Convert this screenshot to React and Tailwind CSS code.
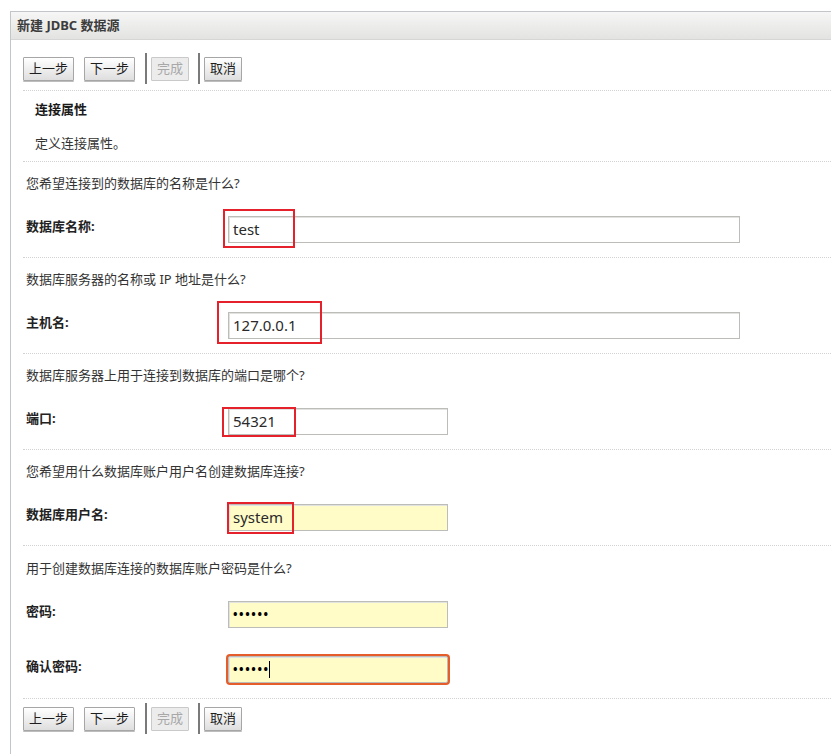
import React from "react";

const font = { fontFamily: '"Noto Sans", "Noto Sans CJK SC", sans-serif' };

function Btn({ children, disabled }) {
  return (
    <div
      className={
        "h-[24px] px-[5px] flex items-center border rounded-[1px] text-[13px] leading-none " +
        (disabled
          ? "border-[#c9c9c9] bg-[#ececec] text-[#a8a8a8]"
          : "border-[#a6a6a6] bg-linear-to-b from-white to-[#dedede] text-[#1e1e1e] shadow-[0_1px_0_#bdbdbd]")
      }
    >
      {children}
    </div>
  );
}

function ButtonRow() {
  return (
    <div className="h-[31px] flex items-center pl-[12px]">
      <Btn>上一步</Btn>
      <div className="w-[10px]" />
      <Btn>下一步</Btn>
      <div className="w-[10px]" />
      <div className="w-[2px] h-[31px] bg-[#7a7a7a]" />
      <div className="w-[4px]" />
      <Btn disabled>完成</Btn>
      <div className="w-[9px]" />
      <div className="w-[2px] h-[31px] bg-[#7a7a7a]" />
      <div className="w-[4px]" />
      <Btn>取消</Btn>
    </div>
  );
}

function Mark({ cls }) {
  return (
    <div className={"absolute border-2 border-[#e5212b] pointer-events-none " + cls} />
  );
}

function Field({ label, value, wide, yellow, mark, password, focus }) {
  return (
    <div className="flex items-start">
      <div className="w-[205px] pl-[3px] leading-[20px] text-[13px] font-bold text-[#222]">
        {label}
      </div>
      <div
        className={
          "relative h-[27px] border border-[#bcbcb8] shadow-[inset_1px_1px_0_#e2e2e0] flex items-center pl-[4px] " +
          (wide ? "w-[512px] " : "w-[220px] ") +
          (yellow ? "bg-[#fffcc8] " : "bg-white ") +
          (focus ? "ring-2 ring-[#e65d2c] rounded-[2px] " : "")
        }
      >
        {password ? (
          <div className="flex items-center">
            <span className="text-[12px] font-bold tracking-[1.6px] text-black leading-none">
              ••••••
            </span>
            {focus && <div className="w-[1px] h-[17px] bg-black ml-[-1px]" />}
          </div>
        ) : (
          <span className="text-[15px] text-[#2a2a2a] leading-none">{value}</span>
        )}
        {mark && <Mark cls={mark} />}
      </div>
    </div>
  );
}

function Section({ question, children }) {
  return (
    <div className="border-t border-dotted border-[#d2d2d2] pt-[11px] pb-[14px]">
      <div className="pl-[3px] leading-[20px] h-[20px] text-[13px] text-[#333]">{question}</div>
      <div className="mt-[23px]">{children}</div>
    </div>
  );
}

export default function App() {
  return (
    <div className="w-full h-[754px] bg-white pt-[11px] pl-[10px] overflow-hidden" style={font}>
      <div className="h-[743px] border-l border-t border-[#c3c6c9]">
        <div className="h-[28px] border-b border-[#d6d6d6] bg-linear-to-b from-[#f6f6f6] to-[#e3e3e1] flex items-center pl-[6px]">
          <span className="text-[13px] font-bold text-[#3c3c3c]">新建 JDBC 数据源</span>
        </div>
        <div>
          <div className="mt-[13px]">
            <ButtonRow />
          </div>
          <div className="ml-[12px] mt-[6px] border-t border-dotted border-[#d2d2d2] pt-[8px] pb-[8px] pl-[12px]">
            <div className="leading-[20px] text-[13px] font-bold text-[#1a1a1a]">连接属性</div>
            <div className="mt-[14px] leading-[20px] text-[13px] text-[#333]">定义连接属性。</div>
          </div>
          <div className="ml-[12px]">
            <Section question="您希望连接到的数据库的名称是什么?">
              <Field
                label="数据库名称:"
                value="test"
                wide
                mark="left-[-6px] top-[-8px] w-[72px] h-[39px]"
              />
            </Section>
            <Section question="数据库服务器的名称或 IP 地址是什么?">
              <Field
                label="主机名:"
                value="127.0.0.1"
                wide
                mark="left-[-12px] top-[-12px] w-[105px] h-[43px]"
              />
            </Section>
            <Section question="数据库服务器上用于连接到数据库的端口是哪个?">
              <Field
                label="端口:"
                value="54321"
                mark="left-[-7px] top-[-2px] w-[74px] h-[30px]"
              />
            </Section>
            <Section question="您希望用什么数据库账户用户名创建数据库连接?">
              <Field
                label="数据库用户名:"
                value="system"
                yellow
                mark="left-[-2px] top-[-3px] w-[67px] h-[32px]"
              />
            </Section>
            <div className="border-t border-dotted border-[#d2d2d2] pt-[12px] pb-[15px]">
              <div className="pl-[3px] leading-[20px] h-[20px] text-[13px] text-[#333]">
                用于创建数据库连接的数据库账户密码是什么?
              </div>
              <div className="mt-[23px]">
                <Field label="密码:" yellow password />
              </div>
              <div className="mt-[28px]">
                <Field label="确认密码:" yellow password focus />
              </div>
            </div>
            <div className="border-t border-dotted border-[#d2d2d2]" />
          </div>
          <div className="mt-[4px]">
            <ButtonRow />
          </div>
        </div>
      </div>
    </div>
  );
}
